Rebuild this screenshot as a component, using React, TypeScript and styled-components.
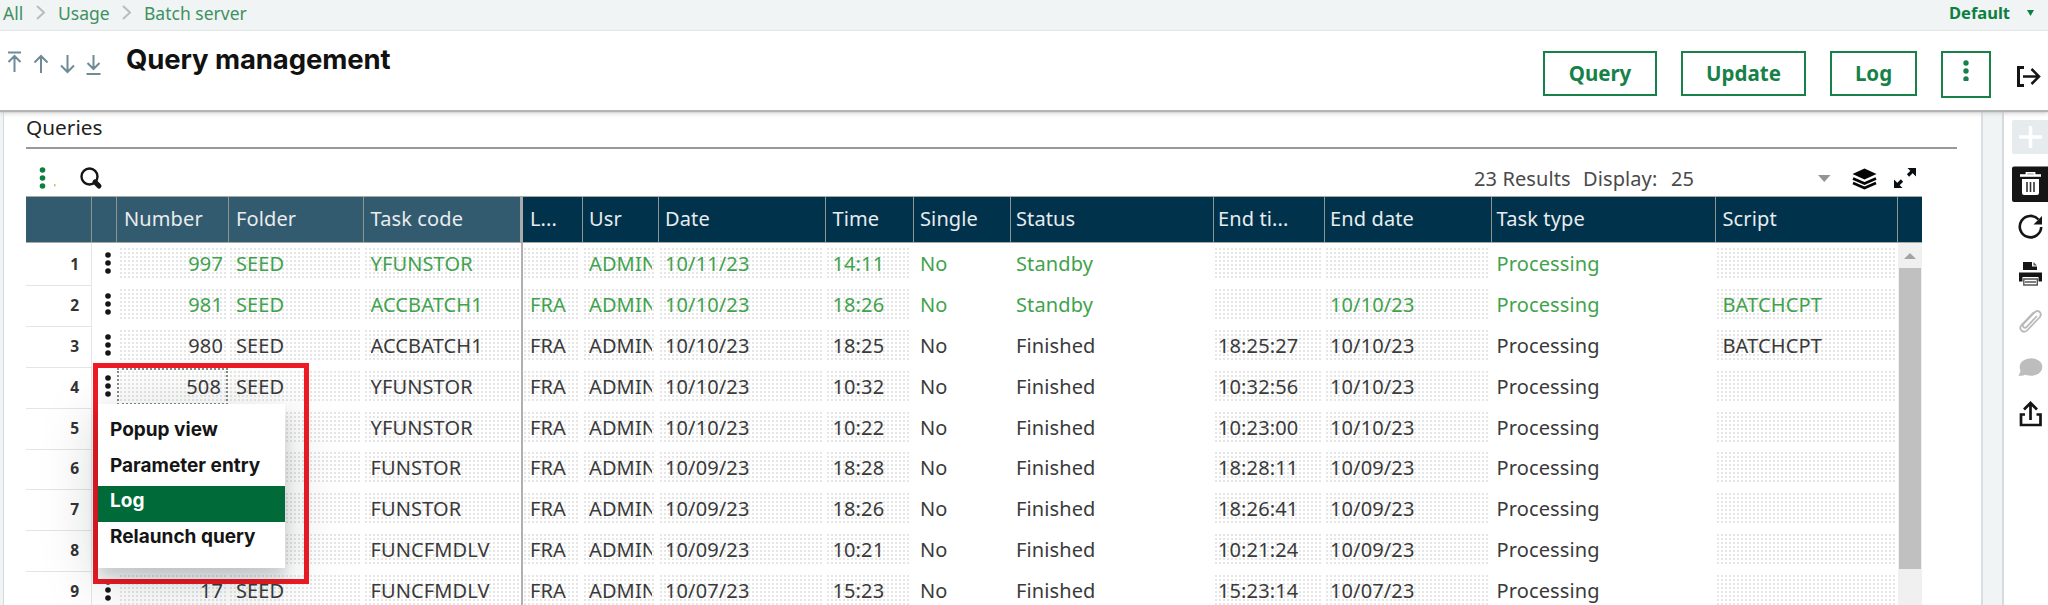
import React from 'react';
import styled, { createGlobalStyle, css } from 'styled-components';

const Global = createGlobalStyle`
  * { box-sizing: border-box; }
  body { margin: 0; background: #fff; font-family: "Noto Sans", sans-serif; overflow: hidden; }
`;

const Page = styled.div`
  height: 605px;
  display: flex;
  flex-direction: column;
  overflow: hidden;
  color: #333;
`;

const CrumbBar = styled.nav`
  flex: none;
  height: 31px;
  background: #f0f4f5;
  display: flex;
  align-items: flex-start;
  padding: 0 14px 0 3px;
  color: #3f9160;
  font-size: 17.5px;
  line-height: 26px;
`;

const Crumb = styled.span<{ $w: number }>`
  width: ${p => p.$w}px;
  white-space: nowrap;
`;

const Sep = styled.svg`
  flex: none;
  width: 9px;
  height: 15px;
  margin: 5px 13px 0 14px;
`;

const Profile = styled.span`
  margin-left: auto;
  display: flex;
  align-items: center;
  gap: 17px;
  color: #0b8040;
  font: 700 16.5px/25px "Noto Sans", sans-serif;
`;

const TitleBar = styled.header`
  flex: none;
  height: 79px;
  display: flex;
  align-items: flex-start;
  background: #fff;
  position: relative;
  z-index: 2;
  box-shadow: 0 1px 1px 1px #b4b4b4, 0 3px 5px #ccc;
  padding: 20px 7px 0 7px;
`;

const NavIcons = styled.svg`
  flex: none;
  width: 96px;
  height: 28px;
`;

const Title = styled.h1`
  margin: -8px 0 0 23px;
  font: 700 27.5px/32px Inter, sans-serif;
  letter-spacing: -0.1px;
  color: #111;
`;

const Actions = styled.div`
  margin-left: auto;
  display: flex;
  gap: 24px;
  align-items: flex-start;
`;

const Button = styled.button<{ $w: number; $h?: number }>`
  width: ${p => p.$w}px;
  height: ${p => p.$h ?? 45}px;
  border: 2px solid #188149;
  background: #fff;
  color: #188149;
  padding: 0;
  font: 700 20.5px/40px "Noto Sans", sans-serif;
  display: flex;
  justify-content: center;
`;

const Exit = styled.svg`
  width: 26px;
  height: 24px;
  margin: 14px 0 0 0;
`;

const Main = styled.div`
  flex: 1;
  min-height: 0;
  display: flex;
  background: #f0f4f5;
`;

const Panel = styled.section`
  width: 1980px;
  margin-left: 3px;
  background: #fff;
  border-left: 1px solid #d5dadd;
  border-right: 2px solid #d9dddf;
  padding: 7px 24px 0 22px;
  display: flex;
  flex-direction: column;
`;

const SectionTitle = styled.h2`
  margin: 0;
  height: 32px;
  border-bottom: 2px solid #999;
  font-weight: 400;
  font-size: 20.8px;
  line-height: 21px;
  color: #222;
`;

const Toolbar = styled.div`
  height: 47px;
  display: flex;
  padding: 16px 40px 0 12px;
  font-size: 20px;
  letter-spacing: 0.1px;
  line-height: 27px;
  color: #4a4a4a;
`;

const ToolLeft = styled.svg`
  width: 70px;
  height: 26px;
  margin-right: auto;
`;

const ToolText = styled.span<{ $w: number }>`
  width: ${p => p.$w}px;
  white-space: nowrap;
`;

const ToolRight = styled.svg`
  width: 101px;
  height: 26px;
`;

const COLS = '66px 25px 112px 135px 159px 60px 76px 167px 88px 97px 203px 111px 167px 224px 182px 24px';

const HeadRow = styled.div`
  display: grid;
  flex: none;
  width: 1896px;
  height: 47px;
  grid-template-columns: ${COLS};
  background: #00324c;
  border-top: 1px solid #a7aaa2;
  border-bottom: 1px solid #a7aaa2;
`;

const HeadCell = styled.div<{ $fixed?: boolean; $thick?: boolean; $pad: number }>`
  border-right: ${p => (p.$thick ? '3px' : '1px')} solid ${p => (p.$thick ? '#aaa' : '#8c9590')};
  background: ${p => (p.$fixed ? '#335b6f' : '#00324c')};
  color: #e8ecee;
  font-size: 20px;
  letter-spacing: 0.12px;
  line-height: 44px;
  padding-left: ${p => p.$pad}px;
  white-space: nowrap;
  overflow: hidden;
  &:last-child { border-right: 0; }
`;

const TableArea = styled.div`
  display: flex;
  flex: 1;
  min-height: 0;
  overflow: hidden;
`;

const Rows = styled.div`
  width: 1872px;
  flex: none;
`;

const Row = styled.div<{ $green?: boolean }>`
  display: grid;
  height: 40.9px;
  grid-template-columns: ${COLS};
  color: ${p => (p.$green ? '#3fa34d' : '#3a3a3a')};
`;

const Index = styled.div`
  border-right: 1px solid #e6e6e6;
  border-bottom: 1px solid #e4e4e4;
  text-align: right;
  padding-right: 12px;
  font-weight: 700;
  font-size: 15.5px;
  line-height: 42px;
  color: #333;
`;

const dots = css`
  background-image: radial-gradient(circle, #e6e6e6 0.9px, transparent 1.5px);
  background-size: 4px 4px;
`;

const Cell = styled.div<{ $thick?: boolean; $inset?: boolean }>`
  border-right: 3px solid transparent;
  ${p => p.$thick && 'border-right: 2px solid #b0b0b0;'}
  padding-left: ${p => (p.$inset ? 2 : 0)}px;
  display: flex;
  align-items: flex-start;
  font-size: 20px;
  letter-spacing: 0.12px;
`;

const Fill = styled.div<{ $plain?: boolean; $right?: boolean; $focus?: boolean; $pad: number }>`
  flex: 1;
  min-width: 0;
  height: 33px;
  margin-top: 4px;
  padding: 0 ${p => (p.$focus ? 5 : p.$right ? 3 : 4.5)}px 0 ${p => p.$pad}px;
  line-height: 33px;
  text-align: ${p => (p.$right ? 'right' : 'left')};
  ${p => !p.$plain && dots}
  outline: ${p => (p.$focus ? '2px dotted #848c84' : 'none')};
`;

const Clip = styled.div`
  overflow: hidden;
  white-space: nowrap;
`;

const Kebab = styled.svg`
  display: block;
  width: 8px;
  height: 24px;
  margin: 8px 0 0 12px;
`;

const Scroll = styled.div`
  width: 24px;
  background: #f0f0f0;
  padding: 10px 1px 0 1px;
  display: flex;
  flex-direction: column;
  align-items: center;
  svg { width: 12px; height: 6px; flex: none; }
`;

const Thumb = styled.div`
  width: 22px;
  height: 301px;
  margin-top: 9px;
  flex: none;
  background: #c0c0c0;
`;

const SideBar = styled.aside`
  margin-left: auto;
  width: 46px;
  background: #fff;
  border-left: 2px solid #d5dadd;
  svg { display: block; width: 44px; height: 495px; }
`;

const MenuFrame = styled.div`
  position: absolute;
  left: 93px;
  top: 363px;
  width: 216px;
  height: 221px;
  border: 5px solid #ee1b24;
  padding-top: 36px;
  z-index: 4;
`;

const Menu = styled.ul`
  list-style: none;
  margin: 0;
  width: 187px;
  height: 164px;
  padding: 11px 0 0;
  background: #fff;
  box-shadow: 0 10px 12px rgba(0, 20, 30, 0.14), 0 12px 60px rgba(0, 20, 30, 0.18);
`;

const MenuItem = styled.li<{ $active?: boolean }>`
  height: 35.5px;
  padding-left: 12px;
  font: 700 19px/30px Inter, sans-serif;
  white-space: nowrap;
  color: ${p => (p.$active ? '#fff' : '#151515')};
  background: ${p => (p.$active ? '#006a39' : 'transparent')};
`;

const columns = [
  { label: 'Number', pad: 7 },
  { label: 'Folder', pad: 7 },
  { label: 'Task code', pad: 6.5 },
  { label: 'L...', pad: 7 },
  { label: 'Usr', pad: 6 },
  { label: 'Date', pad: 6 },
  { label: 'Time', pad: 6.5 },
  { label: 'Single', pad: 6 },
  { label: 'Status', pad: 5 },
  { label: 'End ti...', pad: 4 },
  { label: 'End date', pad: 5 },
  { label: 'Task type', pad: 4.5 },
  { label: 'Script', pad: 6.5 },
];

const data = [
  ['997', 'SEED', 'YFUNSTOR', '', 'ADMIN', '10/11/23', '14:11', 'No', 'Standby', '', '', 'Processing', ''],
  ['981', 'SEED', 'ACCBATCH1', 'FRA', 'ADMIN', '10/10/23', '18:26', 'No', 'Standby', '', '10/10/23', 'Processing', 'BATCHCPT'],
  ['980', 'SEED', 'ACCBATCH1', 'FRA', 'ADMIN', '10/10/23', '18:25', 'No', 'Finished', '18:25:27', '10/10/23', 'Processing', 'BATCHCPT'],
  ['508', 'SEED', 'YFUNSTOR', 'FRA', 'ADMIN', '10/10/23', '10:32', 'No', 'Finished', '10:32:56', '10/10/23', 'Processing', ''],
  ['', '', 'YFUNSTOR', 'FRA', 'ADMIN', '10/10/23', '10:22', 'No', 'Finished', '10:23:00', '10/10/23', 'Processing', ''],
  ['', '', 'FUNSTOR', 'FRA', 'ADMIN', '10/09/23', '18:28', 'No', 'Finished', '18:28:11', '10/09/23', 'Processing', ''],
  ['', '', 'FUNSTOR', 'FRA', 'ADMIN', '10/09/23', '18:26', 'No', 'Finished', '18:26:41', '10/09/23', 'Processing', ''],
  ['', '', 'FUNCFMDLV', 'FRA', 'ADMIN', '10/09/23', '10:21', 'No', 'Finished', '10:21:24', '10/09/23', 'Processing', ''],
  ['17', 'SEED', 'FUNCFMDLV', 'FRA', 'ADMIN', '10/07/23', '15:23', 'No', 'Finished', '15:23:14', '10/07/23', 'Processing', ''],
];

const PLAIN = [7, 8, 11];

const Chevron = () => (
  <Sep viewBox="0 0 9 15"><path d="M1 1l7 6.500-7 6.500" fill="none" stroke="#b9bdbe" strokeWidth="2" /></Sep>
);

export default function App() {
  return (
    <Page>
      <Global />
      <CrumbBar>
        <Crumb $w={19}>All</Crumb><Chevron />
        <Crumb $w={50}>Usage</Crumb><Chevron />
        <Crumb $w={110}>Batch server</Crumb>
        <Profile>Default<svg width="7" height="6"><path d="M0 0h7L3.5 6z" fill="#0b8040" /></svg></Profile>
      </CrumbBar>
      <TitleBar>
        <NavIcons viewBox="7 51 96 28" fill="none" stroke="#6e8b97" strokeWidth="2">
          <path d="M8 52.500h13M14.500 72V56M8.500 62l6-6 6 6M41 73V56M34.500 62.500l6.500-6.500 6.500 6.500M67.500 55v17M61 65.500l6.500 6.500 6.500-6.500M93.500 55v14M87.500 63l6 6 6-6M86.500 74h14" />
        </NavIcons>
        <Title>Query management</Title>
        <Actions>
          <Button $w={114}>Query</Button>
          <Button $w={125}>Update</Button>
          <Button $w={87}>Log</Button>
          <Button $w={50} $h={47}>
            <svg width="8" height="28" viewBox="0 0 8 28" fill="#188149"><circle cx="4" cy="10" r="2.700" /><circle cx="4" cy="18" r="2.700" /><circle cx="4" cy="26" r="2.700" /></svg>
          </Button>
          <Exit viewBox="0 0 26 24" fill="none" stroke="#151515" strokeWidth="3">
            <path d="M9 2.500H3.500v18H9" /><path d="M8 11.500h15.500M16.500 4l7.500 7.500L16.500 19" strokeWidth="2.500" />
          </Exit>
        </Actions>
      </TitleBar>
      <Main>
        <Panel>
          <SectionTitle>Queries</SectionTitle>
          <Toolbar>
            <ToolLeft viewBox="38 165 70 26">
              <g fill="#0b8040"><circle cx="42.500" cy="170" r="2.800" /><circle cx="42.500" cy="178" r="2.800" /><circle cx="42.500" cy="186" r="2.800" /></g>
              <rect x="54" y="184" width="1.500" height="2.500" fill="#e0b85c" />
              <circle cx="89.500" cy="176.500" r="8" fill="none" stroke="#151515" strokeWidth="2.400" />
              <path d="M95 182l4 4" stroke="#151515" strokeWidth="5" strokeLinecap="round" />
            </ToolLeft>
            <ToolText $w={109}>23 Results</ToolText>
            <ToolText $w={88}>Display:</ToolText>
            <ToolText $w={145}>25</ToolText>
            <ToolRight viewBox="1816 165 101 26">
              <path d="M1818 175h12.500l-6.250 7z" fill="#95958f" />
              <path d="M1864.500 168.500l12 5.500-12 5.500-12-5.500z" fill="#050505" />
              <path d="M1853 178.500l11.500 5 11.500-5M1853 183l11.500 5 11.500-5" fill="none" stroke="#050505" strokeWidth="2.700" />
              <path d="M1907.500 168h8.500v8.500zM1902.500 188h-8.500v-8.500z" fill="#0a0f14" />
              <path d="M1908 175.500l4.500-4.500M1902 180.500l-4.500 4.500" stroke="#0a0f14" strokeWidth="3.200" />
            </ToolRight>
          </Toolbar>
          <HeadRow>
            <HeadCell $fixed $pad={0} />
            <HeadCell $fixed $pad={0} />
            {columns.map((c, i) => <HeadCell key={c.label} $fixed={i < 3} $thick={i === 2} $pad={c.pad}>{c.label}</HeadCell>)}
            <HeadCell $pad={0} />
          </HeadRow>
          <TableArea>
            <Rows>
              {data.map((r, i) => (
                <Row key={i} $green={i < 2}>
                  <Index>{i + 1}</Index>
                  <div><Kebab viewBox="0 0 8 24" fill="#151515"><circle cx="4" cy="4" r="2.800" /><circle cx="4" cy="12" r="2.800" /><circle cx="4" cy="20" r="2.800" /></Kebab></div>
                  {r.map((c, j) => (
                    <Cell key={j} $thick={j === 2} $inset={j === 0}>
                      <Fill $plain={PLAIN.includes(j)} $right={j === 0} $focus={i === 3 && j === 0} $pad={columns[j].pad}><Clip>{c}</Clip></Fill>
                    </Cell>
                  ))}
                </Row>
              ))}
            </Rows>
            <Scroll>
              <svg viewBox="0 0 12 6"><path d="M0 6l6-6 6 6z" fill="#a3a3a3" /></svg>
              <Thumb />
            </Scroll>
          </TableArea>
        </Panel>
        <SideBar>
          <svg viewBox="2004 110 44 495">
            <rect x="2012" y="120" width="40" height="34" rx="2" fill="#e6ebed" />
            <path d="M2019 137h23M2030.500 126v22" stroke="#fff" strokeWidth="3.500" />
            <rect x="2012" y="166.500" width="40" height="35.500" rx="2" fill="#151515" />
            <path d="M2020 175.500h21" stroke="#fff" strokeWidth="2.600" />
            <path d="M2026.500 175v-2.200h8V175" fill="none" stroke="#fff" strokeWidth="1.800" />
            <path d="M2022 179h17v14q0 2-2 2h-13q-2 0-2-2z" fill="#fff" />
            <path d="M2027 182v10M2030.500 182v10M2034 182v10" stroke="#333" strokeWidth="1.600" />
            <path d="M2038.500 219.500a10.700 10.700 0 1 0 2.700 7.500" fill="none" stroke="#151515" strokeWidth="2.600" />
            <path d="M2042 216v8.500h-8.500z" fill="#151515" />
            <path d="M2023 262h9v4.500h5v3.500h-14z" fill="#151515" />
            <path d="M2033.500 262l3.500 3.500h-3.500z" fill="#555" />
            <path d="M2019 272.500h23v9h-3.500v-4.500h-16v4.500h-3.500z" fill="#151515" />
            <path d="M2023.800 279h13.500v6h-13.500zM2025 282h11" fill="none" stroke="#555" strokeWidth="1.400" />
            <path d="M2037 316l-10.500 11c-2 2-5-.5-3-3l11-11.500c3.500-3.500 8.500.5 5 5l-12 12.500c-4 4-9.500-.5-6-5l12-12.500" fill="none" stroke="#b9b9b9" strokeWidth="1.800" />
            <ellipse cx="2031" cy="367" rx="11.300" ry="8.800" fill="#bdbdbd" /><path d="M2021 370l-2.500 6q5.500 0 8.500-2z" fill="#bdbdbd" />
            <path d="M2025 414.500h-4v10.500h19.500v-10.500h-4M2030.500 420v-16.500M2024 409.500l6.500-6.500 6.500 6.500" fill="none" stroke="#151515" strokeWidth="2.700" />
          </svg>
        </SideBar>
      </Main>
      <MenuFrame>
        <Menu>
          <MenuItem>Popup view</MenuItem>
          <MenuItem>Parameter entry</MenuItem>
          <MenuItem $active>Log</MenuItem>
          <MenuItem>Relaunch query</MenuItem>
        </Menu>
      </MenuFrame>
    </Page>
  );
}
